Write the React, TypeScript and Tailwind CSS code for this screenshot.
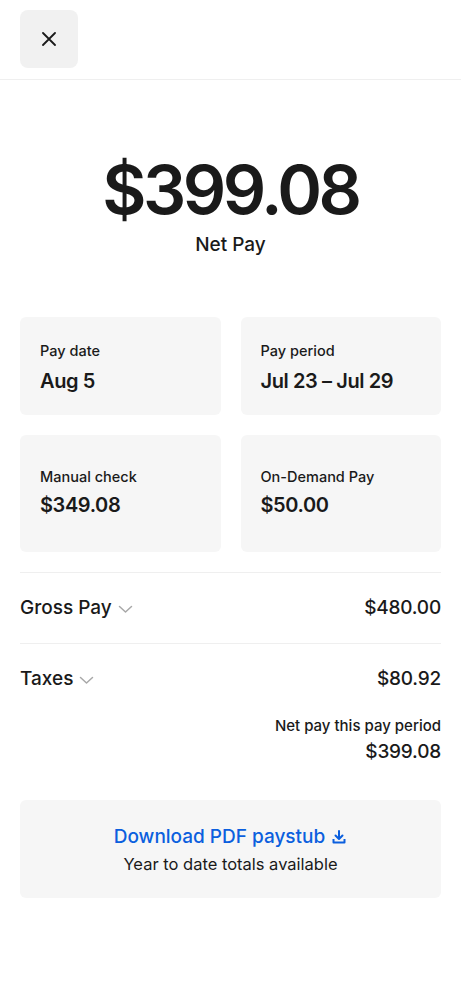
import React from "react";

const font = { fontFamily: "Inter, 'Noto Sans', sans-serif" };

const Chevron = () => (
  <svg width="15" height="14" viewBox="0 0 15 14" className="ml-1.5 mt-0.5">
    <path d="M1.5 4.5 L7.5 10 L13.5 4.5" fill="none" stroke="#a8a8a8" strokeWidth="1.5" strokeLinecap="round" strokeLinejoin="round" />
  </svg>
);

const DownloadIcon = () => (
  <svg width="16" height="16" viewBox="0 0 16 16" className="ml-1.5">
    <path d="M8 2 V9" stroke="#0b5fde" strokeWidth="2" strokeLinecap="round" />
    <path d="M4.5 6.5 L8 10 L11.5 6.5" fill="none" stroke="#0b5fde" strokeWidth="2" strokeLinecap="round" strokeLinejoin="round" />
    <path d="M2.5 10 V13.5 H13.5 V10" fill="none" stroke="#0b5fde" strokeWidth="2" strokeLinejoin="round" />
  </svg>
);

const InfoCard = ({ label, value, tall }: { label: string; value: string; tall?: boolean }) => (
  <div
    className={`flex flex-col justify-center rounded-md bg-[#f6f6f6] px-5 ${tall ? "h-[117px] pb-[2px]" : "h-[98px] pt-[3px]"}`}
  >
    <div className="text-[14.5px] font-medium text-[#1a1a1a] leading-5">{label}</div>
    <div className={`${tall ? "mt-1" : "mt-1.5"} text-[20px] font-semibold text-[#1a1a1a] leading-7 tracking-[-0.4px]`}>{value}</div>
  </div>
);

export default function App() {
  return (
    <div className="min-h-[998px] w-[461px] bg-white text-[#1a1a1a]" style={font}>
      <div className="h-[80px] border-b border-[#efefef] px-5 pt-[10px]">
        <button className="flex h-[58px] w-[58px] items-center justify-center rounded-lg bg-[#f1f1f1]">
          <svg width="14" height="14" viewBox="0 0 14 14">
            <path d="M1 1 L13 13 M13 1 L1 13" stroke="#1a1a1a" strokeWidth="1.8" strokeLinecap="round" />
          </svg>
        </button>
      </div>

      <div className="flex flex-col items-center pt-[68px]">
        <div className="text-[68px] font-semibold leading-[82px] tracking-[-3.5px]">$399.08</div>
        <div className="mt-[3px] text-[19px] font-medium leading-6">Net Pay</div>
      </div>

      <div className="mt-[60px] grid grid-cols-2 gap-x-5 gap-y-5 px-5">
        <InfoCard label="Pay date" value="Aug 5" />
        <InfoCard label="Pay period" value="Jul 23 – Jul 29" />
        <InfoCard label="Manual check" value="$349.08" tall />
        <InfoCard label="On-Demand Pay" value="$50.00" tall />
      </div>

      <div className="mx-5 mt-5 border-t border-[#efefef]">
        <div className="flex h-[71px] items-center justify-between border-b border-[#efefef]">
          <div className="flex items-center text-[19px] font-medium">
            Gross Pay
            <Chevron />
          </div>
          <div className="text-[19px] font-medium tracking-[-0.2px]">$480.00</div>
        </div>
        <div className="flex h-[70px] items-center justify-between">
          <div className="flex items-center text-[19px] font-medium">
            Taxes
            <Chevron />
          </div>
          <div className="text-[19px] font-medium tracking-[-0.2px]">$80.92</div>
        </div>
        <div className="mt-[2px] flex flex-col items-end">
          <div className="text-[15px] font-medium leading-5">Net pay this pay period</div>
          <div className="mt-[4px] text-[19px] font-medium leading-6 tracking-[-0.2px]">$399.08</div>
        </div>
      </div>

      <div className="mx-5 mt-[36px] flex h-[98px] flex-col items-center justify-center rounded-md bg-[#f6f6f6] pt-[3px]">
        <div className="flex items-center text-[19px] font-medium text-[#0b5fde] leading-6">
          Download PDF paystub
          <DownloadIcon />
        </div>
        <div className="mt-[3px] text-[16.5px] text-[#1a1a1a] leading-6">Year to date totals available</div>
      </div>
    </div>
  );
}
